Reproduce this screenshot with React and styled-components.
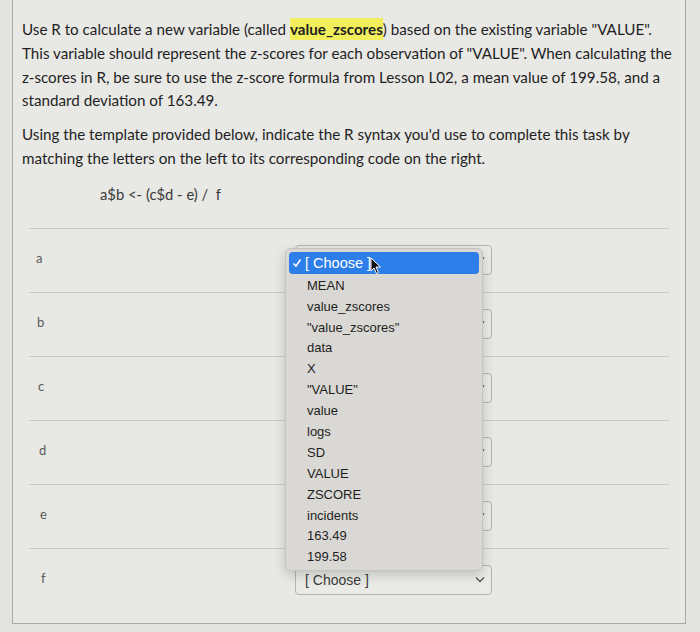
import React from "react";
import styled, { createGlobalStyle } from "styled-components";

const GlobalStyle = createGlobalStyle`
  html, body {
    margin: 0;
    padding: 0;
    background: #e3e3e0;
  }
  body {
    font-family: Lato, "Open Sans", sans-serif;
    color: #262626;
  }
`;

const Card = styled.div`
  margin-left: 12px;
  width: 674px;
  height: 624px;
  box-sizing: border-box;
  border: 1px solid #a8a8a5;
  border-top: none;
  background: #e8e8e5;
  padding: 18px 0 0 9px;
`;

const Paragraph = styled.p`
  margin: 0 0 ${(p) => p.$gap || 8}px;
  width: 652px;
  font-size: 15.2px;
  line-height: 23.8px;
  color: #1f1f1f;
`;

const Highlight = styled.span`
  background: #f3ee5c;
  font-weight: 700;
  padding: 2px 0;
`;

const Formula = styled.div`
  margin: 11px 0 0 78px;
  font-size: 14.8px;
  line-height: 24px;
  color: #3a3a3a;
`;

const Rows = styled.div`
  position: relative;
  margin: 22px 0 0 7px;
  width: 640px;
`;

const Row = styled.div`
  display: grid;
  grid-template-columns: 266px 197px 1fr;
  height: 64px;
  border-top: 1px solid #c9c9c6;
  box-sizing: border-box;
`;

const Label = styled.div`
  padding: 21px 0 0 ${(p) => p.$indent || 7}px;
  font-size: 13px;
  color: #5a5a5a;
`;

const SelectBox = styled.div`
  margin-top: 16px;
  height: 30px;
  box-sizing: border-box;
  border: 1px solid #b4b4b1;
  border-radius: 4px;
  background: #eaeae7;
  display: flex;
  align-items: center;
  justify-content: space-between;
  padding: 0 6px 0 9px;
  font-family: "Liberation Sans", Arial, sans-serif;
  font-size: 14px;
  color: #3a3a3a;
`;

const Menu = styled.ul`
  position: absolute;
  left: 256px;
  top: 20px;
  width: 198px;
  margin: 0;
  padding: 3px 3px 3px;
  box-sizing: border-box;
  list-style: none;
  background: #dad8d4;
  border: 1px solid #c6c4c0;
  border-radius: 6px;
  box-shadow: 0 4px 12px rgba(0, 0, 0, 0.18);
  font-family: "Liberation Sans", Arial, sans-serif;
  font-size: 13px;
  color: #1e1e1e;
`;

const MenuItem = styled.li`
  display: flex;
  align-items: center;
  height: ${(p) => (p.$selected ? 22 : 20.9)}px;
  padding-left: ${(p) => (p.$selected ? 3 : 18)}px;
  margin-bottom: ${(p) => (p.$selected ? 1 : 0)}px;
  border-radius: 4px;
  background: ${(p) => (p.$selected ? "#2d7ee8" : "transparent")};
  color: ${(p) => (p.$selected ? "#fff" : "inherit")};
  font-size: ${(p) => (p.$selected ? 14.5 : 13)}px;
`;

const Check = styled.svg`
  width: 10px;
  height: 10px;
  margin-right: 3px;
`;

const Cursor = styled.svg`
  position: absolute;
  left: 341px;
  top: 29px;
  width: 12px;
  height: 18px;
`;

const Chevron = () => (
  <svg width="10" height="7" viewBox="0 0 10 7">
    <path d="M1 1.5 L5 5.5 L9 1.5" fill="none" stroke="#555" strokeWidth="1.3" />
  </svg>
);

const options = [
  "MEAN",
  "value_zscores",
  '"value_zscores"',
  "data",
  "X",
  '"VALUE"',
  "value",
  "logs",
  "SD",
  "VALUE",
  "ZSCORE",
  "incidents",
  "163.49",
  "199.58",
];

const letters = ["a", "b", "c", "d", "e", "f"];

export default function App() {
  return (
    <>
      <GlobalStyle />
      <Card>
        <Paragraph $gap={10}>
          Use R to calculate a new variable (called <Highlight>value_zscores</Highlight>) based on
          the existing variable "VALUE". This variable should represent the z-scores for each
          observation of "VALUE". When calculating the z-scores in R, be sure to use the z-score
          formula from Lesson L02, a mean value of 199.58, and a standard deviation of 163.49.
        </Paragraph>
        <Paragraph>
          Using the template provided below, indicate the R syntax you'd use to complete this task
          by matching the letters on the left to its corresponding code on the right.
        </Paragraph>
        <Formula>a$b &lt;- (c$d - e) / &nbsp;f</Formula>
        <Rows>
          {letters.map((l, i) => (
            <Row key={l}>
              <Label $indent={7 + i}>{l}</Label>
              <SelectBox>
                <span>[ Choose ]</span>
                <Chevron />
              </SelectBox>
              <div />
            </Row>
          ))}
          <Menu>
            <MenuItem $selected>
              <Check viewBox="0 0 10 10">
                <path d="M1.5 5.5 L4 8 L8.5 1.5" fill="none" stroke="#fff" strokeWidth="1.6" />
              </Check>
              [ Choose ]
            </MenuItem>
            {options.map((o, i) => (
              <MenuItem key={i}>{o}</MenuItem>
            ))}
          </Menu>
          <Cursor viewBox="0 0 12 18">
            <path
              d="M1 1 L1 14 L4 11 L6.5 16.5 L8.5 15.5 L6 10 L10.5 10 Z"
              fill="#111"
              stroke="#fff"
              strokeWidth="1"
            />
          </Cursor>
        </Rows>
      </Card>
    </>
  );
}
